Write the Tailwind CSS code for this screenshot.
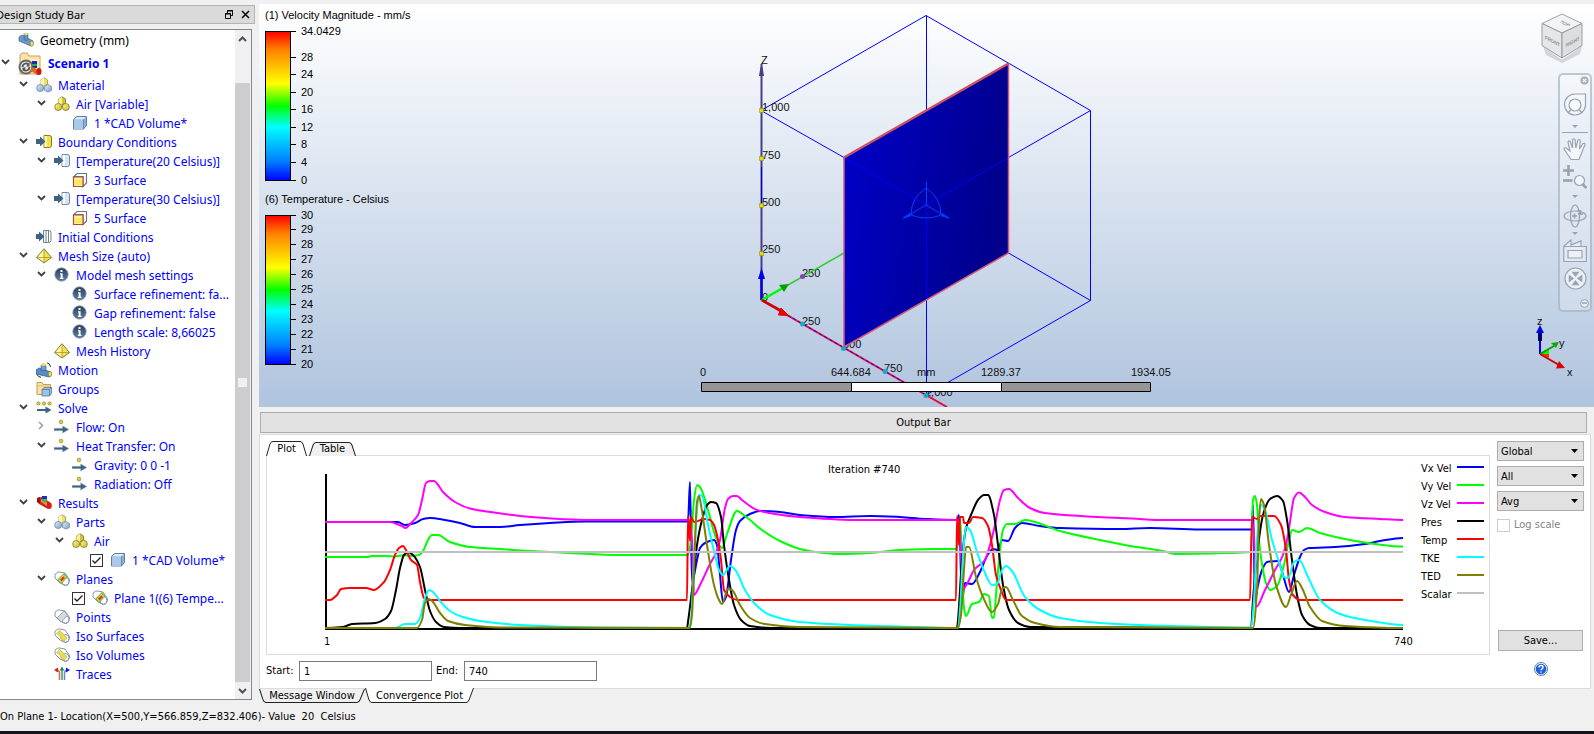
<!DOCTYPE html>
<html lang="en">
<head>
<meta charset="utf-8">
<title>Design Study</title>
<script src="https://cdn.jsdelivr.net/npm/@tailwindcss/browser@4"></script>
</head>
<body class="flex h-screen flex-col overflow-hidden bg-[#f0f0f0] font-['DejaVu_Sans_Condensed','DejaVu_Sans',sans-serif] text-[11px] leading-[14px] text-black">

<svg class="absolute size-0" aria-hidden="true">
  <defs>
    <linearGradient id="steel" x1="0" y1="0" x2="1" y2="1"><stop offset="0" stop-color="#e4eefa"/><stop offset="1" stop-color="#7f9fc4"/></linearGradient>
    <linearGradient id="gold" x1="0" y1="0" x2="1" y2="1"><stop offset="0" stop-color="#fff68a"/><stop offset="1" stop-color="#cdb92c"/></linearGradient>
    <linearGradient id="info" x1="0" y1="0" x2="0" y2="1"><stop offset="0" stop-color="#2a3f58"/><stop offset="1" stop-color="#5d7ea3"/></linearGradient>
    <linearGradient id="rainbow" x1="0" y1="0" x2="0" y2="1"><stop offset="0" stop-color="#f00"/><stop offset=".12" stop-color="#ff8000"/><stop offset=".35" stop-color="#ff0"/><stop offset=".5" stop-color="#0f0"/><stop offset=".64" stop-color="#0ff"/><stop offset=".87" stop-color="#0080ff"/><stop offset="1" stop-color="#00f"/></linearGradient>
    <linearGradient id="plane" x1="0" y1="0" x2="1" y2=".3"><stop offset="0" stop-color="#0000cc"/><stop offset="1" stop-color="#00008c"/></linearGradient>
  </defs>
  <symbol id="i-geometry" viewBox="0 0 16 16"><path d="M1 5l3-2 11 6v4l-2 1L1 9z" fill="#6f98c8" stroke="#3d6086" stroke-width=".7"/><path d="M6 1.500h4v6l-2 1.500-2-1.500z" fill="#5b8fd0" stroke="#41658c" stroke-width=".6"/><ellipse cx="8" cy="2" rx="2" ry="1.200" fill="#e8e06a"/><ellipse cx="13.800" cy="11.500" rx="1.700" ry="2.600" fill="#f0e35a" stroke="#7b7a3b" stroke-width=".6"/></symbol>
  <symbol id="i-scenario" viewBox="0 0 24 24"><path d="M2 22V3l2-2h5l2 3h11v18z" fill="#fbe3a8" stroke="#c9a356"/><path d="M3 8h19" stroke="#fff5d8"/><circle cx="8" cy="15" r="6.500" fill="#e8e8e8" stroke="#666" stroke-width="2"/><path d="M4.500 15a3.500 3.500 0 0 1 6-2.500M11.500 15a3.500 3.500 0 0 1-6 2.500" fill="none" stroke="#555" stroke-width="1.800"/><path d="M11.500 10.500v4h-3.500zM4.500 19.500v-4H8z" fill="#555"/><path d="M14 9h5v7h-5z" fill="#1c2cc0"/><path d="M14 12h5v2h-5z" fill="#18b05c"/><path d="M13 14l9 5v3l-3 1-6-4z" fill="#e06a1c"/><ellipse cx="21" cy="19.500" rx="2.500" ry="3.500" fill="#cf1515"/></symbol>
  <symbol id="i-mat" viewBox="0 0 16 16"><path d="M8 .8L11.600 3v4L8 9 4.400 7V3z" fill="#eee06a" stroke="#8d8a5a" stroke-width=".8"/><path d="M8 .8V9L4.400 7V3z" fill="#fdf7b4"/><circle cx="4.200" cy="11" r="3.500" fill="url(#steel)" stroke="#6887a8" stroke-width=".8"/><path d="M12 7.500l3.400 2v4L12 15l-3.400-1.500v-4z" fill="url(#steel)" stroke="#6887a8" stroke-width=".8"/></symbol>
  <symbol id="i-air" viewBox="0 0 16 16"><path d="M8 .8L11.600 3v4L8 9 4.400 7V3z" fill="#cfc23e" stroke="#77701f" stroke-width=".8"/><path d="M8 .8V9L4.400 7V3z" fill="#f8f08c"/><circle cx="4.200" cy="11" r="3.500" fill="url(#gold)" stroke="#7d7622" stroke-width=".8"/><circle cx="11.800" cy="11" r="3.500" fill="url(#gold)" stroke="#7d7622" stroke-width=".8"/></symbol>
  <symbol id="i-cube" viewBox="0 0 16 16"><path d="M1.500 4.500l3-3h10v9l-3 3.500h-10z" fill="#8fb1d8" stroke="#5c7fa6"/><path d="M2 5h9v9H2z" fill="#a9c8ea"/><path d="M2 4.500l3-2.500h9l-3 2.500z" fill="#dbe9f8"/><path d="M11.500 4.500V14" stroke="#5c7fa6" stroke-width=".8"/></symbol>
  <symbol id="i-bc" viewBox="0 0 16 16"><path d="M8 1.500h5.500q2 0 2 2v8q0 2-2 2H8z" fill="#f1df4a" stroke="#85782a"/><path d="M8.500 2h2.500v11H8.500z" fill="#fffab5"/><path d="M0 5h4V2.500l5.500 5L4 12.500V10H0z" fill="#3f6282"/></symbol>
  <symbol id="i-temp" viewBox="0 0 16 16"><path d="M8 1.500h5.500q2 0 2 2v8q0 2-2 2H8z" fill="#d7e3f2" stroke="#6f87a2"/><path d="M8.500 2h2.500v11H8.500z" fill="#fff"/><path d="M0 5h4V2.500l5.500 5L4 12.500V10H0z" fill="#3f6282"/></symbol>
  <symbol id="i-init" viewBox="0 0 16 16"><path d="M7.500 1.500h5q2.500 0 2.500 2v8q0 2-2.500 2h-5z" fill="#fff" stroke="#70808f"/><path d="M10 1.500v12M12.500 1.500v12" stroke="#70808f"/><path d="M0 5h3V2.500l5.500 5L3 12.500V10H0z" fill="#3f6282"/></symbol>
  <symbol id="i-surf" viewBox="0 0 16 16"><path d="M5 1.500h9.500V11L11 14.500V4.500H2z" fill="#fff" stroke="#6b7886" stroke-width="1.200"/><path d="M1.500 5h9.500v9.500H1.500z" fill="#fdf29a" stroke="#b4483a" stroke-width="1.200"/><path d="M3 8h7v5H3z" fill="#f7e95a"/></symbol>
  <symbol id="i-mesh" viewBox="0 0 16 16"><path d="M8 .7L15.500 9.500 8 15 .5 9.500z" fill="#f2e24f" stroke="#7f7a4a"/><path d="M8 1.500V14L1.500 9.500z" fill="#fff59b"/><path d="M1 9.500h14M8 1v13" stroke="#a99a2c" stroke-width=".8"/></symbol>
  <symbol id="i-info" viewBox="0 0 16 16"><circle cx="7.500" cy="7.500" r="6.700" fill="url(#info)" stroke="#8da0b6" stroke-width=".8"/><path d="M6.500 3h2v2h-2zM6 6.200h2.600v4.600H9.500V12H5.800v-1.200h.9V7.400H6z" fill="#fff"/></symbol>
  <symbol id="i-motion" viewBox="0 0 16 16"><path d="M0 8l3-2 12 4v4l-2 1L0 12z" fill="#5b8ac4" stroke="#2f5683" stroke-width=".7"/><path d="M5 3.500h5v5H5z" fill="#6c9cd6" stroke="#2f5683" stroke-width=".6"/><ellipse cx="7.500" cy="2.500" rx="2.500" ry="1.500" fill="#f0e04c"/><ellipse cx="14" cy="12" rx="1.600" ry="2.800" fill="#f0e04c" stroke="#807b31" stroke-width=".6"/><path d="M11 .8q3 .5 3.500 4M1 12.500q1 2.500 4 2.800" fill="none" stroke="#222"/></symbol>
  <symbol id="i-groups" viewBox="0 0 16 16"><path d="M1 13.500v-12h5l1 2h7.500v10z" fill="#fbe2a0" stroke="#c8a04c"/><path d="M1 5h13" stroke="#e0bd70"/><path d="M6 8.500L8 6.500h7.500v6l-2 2.500H6z" fill="#9fc0e6" stroke="#54789f" stroke-width=".8"/><path d="M6 8.500h7.500V15M13.500 8.500l2-2" fill="none" stroke="#54789f" stroke-width=".8"/></symbol>
  <symbol id="i-solve" viewBox="0 0 16 16"><g fill="#d9cb3c" stroke="#8c8434" stroke-width=".6"><circle cx="2.500" cy="3.500" r="1.700"/><circle cx="8" cy="3.500" r="1.700"/><circle cx="13.500" cy="3.500" r="1.700"/></g><path d="M1 9h8.500V6.500l6 3.500-6 3.500V11H1z" fill="#3f6282"/></symbol>
  <symbol id="i-step" viewBox="0 0 16 16"><circle cx="7" cy="3" r="1.900" fill="#d9cb3c" stroke="#8c8434" stroke-width=".6"/><path d="M0 9.300h8.500V6.800l6.500 3.700-6.500 3.700v-2.500H0z" fill="#3f6282" stroke="#b8c6d4" stroke-width=".5"/></symbol>
  <symbol id="i-results" viewBox="0 0 16 16"><path d="M1 3l5-1 9 6v5l-3 1-9-5-2-2z" fill="#c22"/><path d="M1 3l3-1v6L1 7z" fill="#a01010"/><path d="M5 4l6 3v4l-6-4z" fill="#f08a28"/><path d="M6 1h5v4H6z" fill="#1b2dc4"/><path d="M6 4h5v2L8.500 7 6 6z" fill="#25c36b"/><ellipse cx="13.800" cy="10.700" rx="2" ry="3" fill="#d81c1c"/></symbol>
  <symbol id="i-tube" viewBox="0 0 16 16"><path d="M1 4.500C1 2.500 3 .8 5.500 1l5.500 1 4.500 6.500c.5 2.500-1.500 5.500-4 5.800L6 12 1 7z" fill="#fff" stroke="#8294a8"/><ellipse cx="11.500" cy="10.500" rx="3.500" ry="4" fill="none" stroke="#8294a8"/></symbol>
  <symbol id="i-planes" viewBox="0 0 16 16"><use href="#i-tube"/><path d="M3 9l7-7 3.500 4L7.500 13z" fill="#58b868"/><path d="M4.500 9l5-5.500 2.800 2.700-5 5.500z" fill="#f0d832"/><path d="M6 8.500l3.300-3.300 1.700 1.700-3.500 3.500z" fill="#e8361c"/></symbol>
  <symbol id="i-points" viewBox="0 0 16 16"><use href="#i-tube"/><path d="M3 9l7-7 3.500 4L7.500 13z" fill="#d4dae0" stroke="#8f9ba8" stroke-width=".8"/></symbol>
  <symbol id="i-iso" viewBox="0 0 16 16"><use href="#i-tube"/><path d="M2.500 5.500l3-3 2 1.500 5.500 6-3 3.500-4-3.500 1-1z" fill="#e9dc4e" stroke="#b5aa4a" stroke-width=".6"/></symbol>
  <symbol id="i-traces" viewBox="0 0 16 16"><path d="M5.500 14V6.500Q5 4.500 3 4" fill="none" stroke="#e86060" stroke-width="1.500"/><path d="M10.500 14V6.500Q11 4.500 13 4" fill="none" stroke="#6a80e0" stroke-width="1.500"/><path d="M8 14V4" stroke="#34a06a" stroke-width="1.500"/><path d="M4 1.500v5L0 4z" fill="#e01818"/><path d="M12 1.500v5L16 4z" fill="#1818d8"/><path d="M5.700 4.500h4.600L8 .5z" fill="#168a4a"/></symbol>
</svg>

<main class="flex min-h-0 flex-1">
  <aside class="flex w-[259px] shrink-0 flex-col pt-[5px]">
    <header class="mr-1 flex h-[19px] shrink-0 items-center overflow-hidden border border-l-0 border-[#b4b4b4] bg-[#dadada] pr-1">
      <h1 class="-ml-1 flex-1 font-['Noto_Sans',sans-serif] text-[11px]">Design Study Bar</h1>
      <button aria-label="Float" class="mr-2"><svg width="8" height="9" viewBox="0 0 8 9" fill="none" stroke="#000"><path d="M2.500 3V.5h5v5H5.500M2 1h6" /><path d="M.5 3.500h5v5h-5zM0 4h6"/></svg></button>
      <button aria-label="Close"><svg width="9" height="9" viewBox="0 0 9 9" stroke="#000" stroke-width="1.500"><path d="M1 1l7 7M8 1L1 8"/></svg></button>
    </header>
    <div class="mt-[5px] mr-[7px] mb-[3px] flex min-h-0 flex-1 border border-l-0 border-[#828790] bg-white">
      <ul id="tree" role="tree" class="min-w-0 flex-1 overflow-hidden font-['Noto_Sans',sans-serif] text-[12px] whitespace-nowrap text-[#0000ff]"></ul>
      <div class="flex w-[16px] shrink-0 flex-col bg-[#f0f0f0] pr-px">
        <button aria-label="Scroll up" class="grid h-[53px] justify-center pt-[6px]"><svg width="9" height="6" viewBox="0 0 9 6" fill="none" stroke="#505050" stroke-width="2"><path d="M1 5l3.500-3.500L8 5"/></svg></button>
        <div class="grid min-h-0 flex-1 place-items-center bg-[#cdcdcd]"><span class="size-[9px] bg-[#f0f0f0]"></span></div>
        <button aria-label="Scroll down" class="grid h-[17px] place-items-center"><svg width="9" height="6" viewBox="0 0 9 6" fill="none" stroke="#505050" stroke-width="2"><path d="M1 1l3.500 3.500L8 1"/></svg></button>
      </div>
    </div>
  </aside>

  <section class="flex min-w-0 flex-1 flex-col pt-1">
    <div class="relative shrink-0 bg-linear-to-b from-white to-[#b0c4de]">
      <svg class="block h-[403px] w-full font-['Liberation_Sans',sans-serif] text-[11px]" viewBox="259 4 1335 403" preserveAspectRatio="xMinYMin slice">
        <g id="legends"></g>

        <path d="M761 110.500L926 15.500 1090.500 110.500V300.500L926 395M926.500 15.500V395M761 110.500l83 47M1090.500 110.500l-82 47M1090.500 300.500l-82-47.500" fill="none" stroke="#0000ff"/>
        <g fill="#111">
          <text x="762" y="111">1,000</text><text x="762" y="159">750</text><text x="762" y="206">500</text><text x="762" y="253">250</text>
          <text x="761" y="64">Z</text><text x="762" y="301">0</text>
          <text x="802" y="277">250</text><text x="802" y="325">250</text><text x="884" y="372">750</text><text x="925" y="396">1,000</text>
        </g>
        <path d="M761 300L947 407" stroke="#e01040" stroke-width="2"/>
        <path d="M788 315.500L926 395" stroke="#0000ff" stroke-dasharray="3 3"/>
        <path d="M761 300.500l83-47.500" stroke="#2ccc2c" stroke-width="1.500"/>
        <text x="843" y="348" fill="#111">500</text>
        <path d="M844 157.500L1008.500 63.500V253L844 347z" fill="url(#plane)"/>
        <path d="M844 157.500l82 47.500 82.500-47.500M926.500 205V301" fill="none" stroke="#0000f4"/>
        <path d="M1008.500 63.500V253L844 347V157.500" fill="none" stroke="#d8587c" stroke-width="1.500"/>
        <path d="M844 157.500L1008.500 63.500" stroke="#cc5060" stroke-width="2.500"/>
        <g fill="none" stroke="#0040ff"><path d="M926.500 182v23M926 188q-15 10-15 27 15 6 30 0 0-17-15-27M926 205l-22 13M926 205l22 13"/><path d="M903 218l7-4.500v2.500zM949 218l-7-4.500v2.500z" fill="#0040ff"/></g>
        <path d="M761.500 64v236" stroke="#483d8b" stroke-width="2"/>
        <path d="M761.500 167v38" stroke="#0000d0" stroke-width="1"/>
        <path d="M759 76l1.500-9h2l1.500 9z" fill="#483d8b"/>
        <path d="M761.500 278v22" stroke="#0000e0" stroke-width="2.500"/><path d="M758 279l3.500-11 3.500 11z" fill="#0000f0"/>
        <path d="M762 300l19-11" stroke="#00ff00" stroke-width="2.500"/><path d="M779 285l10-1-5 8z" fill="#00a000"/>
        <path d="M762 300l18 10" stroke="#d00000" stroke-width="2.500"/><path d="M781 308l7.500 7.500-10-.5z" fill="#f00000" stroke="#d00" />
        <g fill="#e6dc00" stroke="#8a8420" stroke-width=".5"><path d="M759.500 108.500h4v4h-4zM759.500 156.500h4v4h-4zM759.500 203.500h4v4h-4zM759.500 251.500h4v4h-4z"/></g>
        <g fill="#20a8b8"><circle cx="802.500" cy="324" r="2.500"/><circle cx="843.500" cy="348.500" r="2.500"/><circle cx="885" cy="371.500" r="2.500"/><circle cx="926" cy="395.500" r="2.500"/></g>
        <circle cx="802.500" cy="276.500" r="2.500" fill="#8e3cb8"/>

        <g stroke="#000"><path d="M701.500 382.500h150v9h-150zM1001.500 382.500h149v9h-149z" fill="#969696"/><path d="M851.500 382.500h150v9h-150z" fill="#fff"/></g>
        <g fill="#111"><text x="700" y="376">0</text><text x="831" y="376">644.684</text><text x="917" y="376">mm</text><text x="981" y="376">1289.37</text><text x="1131" y="376">1934.05</text></g>

        <path d="M1543 46l19 14 20-14-2 8-18 9-16-8z" fill="#808890" opacity=".3"/>
        <g stroke="#8c8c8c" stroke-width=".8"><path d="M1562 14l-20 9.500 20 9.500 20-9.500z" fill="#f2f3f4"/><path d="M1542 23.500v22l20 12.500V33z" fill="#e4e6e8"/><path d="M1582 23.500v22L1562 58V33z" fill="#dcdee0"/></g>
        <g fill="#8a8a8a" class="text-[5px] font-bold"><text transform="matrix(.87 .45 0 1 1545 39)">FRONT</text><text transform="matrix(.87 -.45 0 1 1566 47)">RIGHT</text><text transform="matrix(.87 .45 -.87 .45 1559 22)">TOP</text></g>

        <path d="M1540 354V332" stroke="#0000e0" stroke-width="2"/><path d="M1536 333l4-8 4 8z" fill="#0000f0"/><path d="M1538 333h4v8h-4z" fill="#000060"/>
        <path d="M1540 354l9-5v5z" fill="#00ff00"/><path d="M1540 354l14-8" stroke="#00a000" stroke-width="2"/><path d="M1551 343l8-1-3 6z" fill="#00b000"/>
        <path d="M1541 354h8v4z" fill="#ff3000"/><path d="M1540 354l19 11" stroke="#d00000" stroke-width="2"/><path d="M1559 361l6 7-9 .5z" fill="#e00000"/>
        <g fill="#111"><text x="1537" y="325">z</text><text x="1559" y="347">y</text><text x="1567" y="376">x</text></g>
      </svg>

      <nav aria-label="Navigation" class="absolute top-[69px] right-[2px] flex h-[239px] w-[34px] flex-col items-center rounded-[5px] border-2 border-[#9aa8b8]/60 bg-white/20 text-[#98a3af]">
        <button aria-label="Close bar" class="mt-px self-end pr-px"><svg class="size-[9px]" viewBox="0 0 9 9"><circle cx="4.500" cy="4.500" r="4" fill="#a4adb8"/><path d="M2.800 2.800l3.400 3.400M6.200 2.800L2.800 6.200" stroke="#fff" stroke-width="1.200"/></svg></button>
        <button aria-label="Wheel" class="mt-2"><svg class="size-[24px]" viewBox="0 0 24 24" fill="#fff5" stroke="currentColor" stroke-width="1.200"><path d="M12 1h10.500v11a10.500 10.500 0 1 1-10.500-11z"/><circle cx="12" cy="12" r="6"/><path d="M8 16.500L5 20M16 16.500l3 3.500" /></svg></button>
        <svg class="mt-2 h-[3px] w-[6px]" viewBox="0 0 6 3"><path d="M0 0h6L3 3z" fill="currentColor"/></svg>
        <hr class="mt-1 w-[26px] border-[#98a3af]">
        <button aria-label="Pan" class="mt-1"><svg class="size-[24px]" viewBox="0 0 24 24" fill="#fff8" stroke="currentColor" stroke-width="1.200"><path d="M7 21L3 15 1 12q.5-2 2.500-.8L7 14 5 5q1-2 2.300-.3L9.500 11l.2-8.500q1.300-1.500 2.300 0l.8 8.500L15 3q1.500-1.200 2.200.5L16.500 12 20 6.500q1.800-.7 2 1L19 15l-3 7.500H8z"/></svg></button>
        <button aria-label="Zoom" class="mt-1"><svg class="size-[24px]" viewBox="0 0 24 24" fill="none" stroke="currentColor"><path d="M5.500 0v11M0 5.500h11" stroke-width="2.600"/><path d="M0 15.500h9.500" stroke-width="2.600"/><circle cx="16.500" cy="15.500" r="5" fill="#fff8" stroke-width="1.200"/><path d="M19.500 19l4 4" stroke-width="2.600"/></svg></button>
        <svg class="mt-1.5 h-[3px] w-[6px]" viewBox="0 0 6 3"><path d="M0 0h6L3 3z" fill="currentColor"/></svg>
        <button aria-label="Orbit" class="mt-1.5"><svg class="size-[24px]" viewBox="0 0 24 24" fill="none" stroke="currentColor" stroke-width="1.200"><ellipse cx="12" cy="12" rx="11" ry="5"/><ellipse cx="12" cy="12" rx="4.500" ry="11"/><path d="M9 12h5M11.500 9.500v5M15 10h5M17.500 6v5M14 7h4" stroke-width="1.500"/></svg></button>
        <svg class="mt-1 h-[3px] w-[6px]" viewBox="0 0 6 3"><path d="M0 0h6L3 3z" fill="currentColor"/></svg>
        <button aria-label="Show motion" class="mt-1"><svg class="size-[24px]" viewBox="0 0 24 24" fill="#fff5" stroke="currentColor" stroke-width="1.200"><path d="M.8 7.500h22.500v15H.8z"/><path d="M5 11.500h14v7.500H5z"/><path d="M1 7L8 1v5l10-4v5"/></svg></button>
        <button aria-label="Fit" class="mt-1"><svg class="size-[23px]" viewBox="0 0 24 24" fill="#fff8" stroke="currentColor" stroke-width="1.200"><circle cx="12" cy="12" r="11"/><path d="M9 5.500h6L12 9.500zM9 18.500h6L12 14.500zM5.500 9v6L9.500 12zM18.500 9v6L14.500 12z" fill="currentColor"/></svg></button>
        <button aria-label="Options" class="mt-auto self-end pr-px pb-[2px]"><svg class="size-[9px]" viewBox="0 0 9 9"><circle cx="4.500" cy="4.500" r="3.900" fill="#fff8" stroke="currentColor"/><path d="M2 4h5" stroke="currentColor" stroke-width="1.500"/></svg></button>
      </nav>
    </div>

    <h2 class="mt-[5px] mr-[7px] ml-px flex h-[21px] shrink-0 items-center justify-center border border-[#adadad] bg-[#e1e1e1]">Output Bar</h2>

    <div class="mt-px mr-[3px] flex gap-[7px] border border-[#dcdcdc] bg-white pt-[6px] pr-[6px] pb-[7px] pl-[6px]">
      <div class="min-w-0 flex-1">
        <div role="tablist" class="flex h-[14px] items-end gap-[2px] pr-1">
          <button role="tab" aria-selected="true" class="-mb-px grid h-[15px] w-[41px]"><svg class="col-start-1 row-start-1 h-full w-full" viewBox="0 0 41 15" preserveAspectRatio="none"><path d="M.5 15L4 3Q5 .5 7 .5H34Q36 .5 37 3L40.500 15" fill="#fff" stroke="#222"/></svg><span class="col-start-1 row-start-1 pt-px">Plot</span></button>
          <button role="tab" aria-selected="false" class="grid h-[13px] w-[47px]"><svg class="col-start-1 row-start-1 h-full w-full" viewBox="0 0 47 13" preserveAspectRatio="none"><path d="M.5 13L4 3Q5 .5 7 .5H40Q42 .5 43 3L46.500 13" fill="#f0f0f0" stroke="#222"/></svg><span class="col-start-1 row-start-1">Table</span></button>
        </div>
        <div class="border border-[#dcdcdc]">
          <svg id="chart" class="block h-[198px] w-full text-[11px]" viewBox="267 456 1222 198">
            <text x="828" y="473">Iteration #740</text>
            <path d="M326 474v155M325 629H1403" stroke="#000" stroke-width="2" fill="none"/>
            <text x="324" y="645">1</text><text x="1394" y="645">740</text>
          </svg>
        </div>
        <form class="mt-[6px] flex h-[20px] items-center">
          <label for="start" class="w-[33px]">Start:</label>
          <input id="start" value="1" class="h-[20px] w-[133px] border border-[#7a7a7a] bg-white px-1 pt-px outline-none">
          <label for="end" class="w-[32px] pl-1">End:</label>
          <input id="end" value="740" class="h-[20px] w-[133px] border border-[#7a7a7a] bg-white px-1 pt-px outline-none">
        </form>
      </div>
      <div class="flex w-[87px] shrink-0 flex-col">
        <div class="grid h-[20px] items-center"><select aria-label="Scope" class="col-start-1 row-start-1 h-[20px] w-full appearance-none border border-[#adadad] bg-[#e1e1e1] px-[3px] leading-[17px] outline-none"><option>Global</option></select><svg class="pointer-events-none col-start-1 row-start-1 mr-[6px] h-[4px] w-[7px] justify-self-end" viewBox="0 0 7 4"><path d="M0 0h7L3.500 4z"/></svg></div>
        <div class="mt-[5px] grid h-[20px] items-center"><select aria-label="Variables" class="col-start-1 row-start-1 h-[20px] w-full appearance-none border border-[#adadad] bg-[#e1e1e1] px-[3px] leading-[17px] outline-none"><option>All</option></select><svg class="pointer-events-none col-start-1 row-start-1 mr-[6px] h-[4px] w-[7px] justify-self-end" viewBox="0 0 7 4"><path d="M0 0h7L3.500 4z"/></svg></div>
        <div class="mt-[5px] grid h-[20px] items-center"><select aria-label="Statistic" class="col-start-1 row-start-1 h-[20px] w-full appearance-none border border-[#adadad] bg-[#e1e1e1] px-[3px] leading-[17px] outline-none"><option>Avg</option></select><svg class="pointer-events-none col-start-1 row-start-1 mr-[6px] h-[4px] w-[7px] justify-self-end" viewBox="0 0 7 4"><path d="M0 0h7L3.500 4z"/></svg></div>
        <label class="mt-[7px] flex items-center gap-1 text-[#838383]"><input type="checkbox" disabled class="size-[13px] appearance-none border border-[#cccccc] bg-white">Log scale</label>
        <button class="mx-px mt-auto mb-[11px] h-[21px] border border-[#adadad] bg-[#e1e1e1]">Save...</button>
        <button aria-label="Help" class="mb-[5px] self-center"><svg class="block" width="14" height="14" viewBox="0 0 14 14"><circle cx="7" cy="7" r="6.500" fill="#fff" stroke="#5578b8"/><circle cx="7" cy="7" r="5.300" fill="#1d5fd6"/><path d="M5 5.500q0-2 2-2t2 1.700q0 1-1 1.600-1 .5-1 1.500M7 9.400v1.400" fill="none" stroke="#fff" stroke-width="1.400"/></svg></button>
      </div>
    </div>
    <div role="tablist" class="-mt-px flex items-start">
      <button role="tab" aria-selected="false" class="mt-px grid h-[13px] w-[106px]"><svg class="col-start-1 row-start-1 h-full w-full" viewBox="0 0 106 13" preserveAspectRatio="none"><path d="M.5 0L4 10Q5 12.500 7 12.500H98Q100 12.500 101 10L105.500 0" fill="#f0f0f0" stroke="#222"/></svg><span class="col-start-1 row-start-1">Message Window</span></button>
      <button role="tab" aria-selected="true" class="grid h-[15px] w-[109px]"><svg class="col-start-1 row-start-1 h-full w-full" viewBox="0 0 109 15" preserveAspectRatio="none"><path d="M.5 0L4 12Q5 14.500 7 14.500H101Q103 14.500 104 12L108.500 0" fill="#fff" stroke="#222"/></svg><span class="col-start-1 row-start-1 pt-px">Convergence Plot</span></button>
    </div>
  </section>
</main>
<footer class="flex h-[31px] shrink-0 items-center border-b-[3px] border-[#161418] whitespace-pre">On Plane 1- Location(X=500,Y=566.859,Z=832.406)- Value  20  Celsius</footer>

<script>
// level, disclosure state, icon, label, options
const rows = [
  [0, '', 'geometry', 'Geometry (mm)', 'root'], [0, 'open', 'scenario', 'Scenario 1', 'scenario'],
  [1, 'open', 'mat', 'Material'], [2, 'open', 'air', 'Air [Variable]'], [3, '', 'cube', '1 *CAD Volume*'],
  [1, 'open', 'bc', 'Boundary Conditions'], [2, 'open', 'temp', '[Temperature(20 Celsius)]'], [3, '', 'surf', '3 Surface'],
  [2, 'open', 'temp', '[Temperature(30 Celsius)]'], [3, '', 'surf', '5 Surface'], [1, '', 'init', 'Initial Conditions'],
  [1, 'open', 'mesh', 'Mesh Size (auto)'], [2, 'open', 'info', 'Model mesh settings'], [3, '', 'info', 'Surface refinement: fa...'],
  [3, '', 'info', 'Gap refinement: false'], [3, '', 'info', 'Length scale: 8,66025'], [2, '', 'mesh', 'Mesh History'],
  [1, '', 'motion', 'Motion'], [1, '', 'groups', 'Groups'], [1, 'open', 'solve', 'Solve'], [2, 'closed', 'step', 'Flow: On'],
  [2, 'open', 'step', 'Heat Transfer: On'], [3, '', 'step', 'Gravity: 0 0 -1'], [3, '', 'step', 'Radiation: Off'],
  [1, 'open', 'results', 'Results'], [2, 'open', 'mat', 'Parts'], [3, 'open', 'air', 'Air'], [4, '', 'cube', '1 *CAD Volume*', 'check'],
  [2, 'open', 'planes', 'Planes'], [3, '', 'planes', 'Plane 1((6) Tempe...', 'check'], [2, '', 'points', 'Points'],
  [2, '', 'iso', 'Iso Surfaces'], [2, '', 'iso', 'Iso Volumes'], [2, '', 'traces', 'Traces']
];
const chevrons = {
  open: '<svg class="h-[6px] w-[9px]" viewBox="0 0 9 6" fill="none" stroke="#404040" stroke-width="1.800"><path d="M1 1l3.500 3.500L8 1"/></svg>',
  closed: '<svg class="h-[9px] w-[6px]" viewBox="0 0 6 9" fill="none" stroke="#a0a0a0" stroke-width="1.600"><path d="M1 1l3.500 3.500L1 8"/></svg>'
};
document.getElementById('tree').innerHTML = rows.map(([level, state, icon, label, kind], i) => {
  const rowClass = kind === 'scenario' ? 'flex h-[25px] items-center font-bold' : kind === 'root' ? 'flex h-[21px] items-center text-black' : 'flex h-[19px] items-center';
  const iconClass = kind === 'scenario' ? 'size-[24px] mr-[6px] shrink-0' : 'size-[16px] mr-[6px] mb-[2px] shrink-0';
  const box = kind === 'check' ? `<span class="mr-[7px] grid shrink-0 place-items-center"><input id="n${i}" type="checkbox" checked class="col-start-1 row-start-1 size-[13px] appearance-none border border-[#333333] bg-white"><svg class="pointer-events-none col-start-1 row-start-1 size-[9px]" viewBox="0 0 9 9" fill="none" stroke="#222" stroke-width="1.400"><path d="M.5 4.500L3 7l5.500-5.500"/></svg></span>` : '';
  const text = kind === 'check' ? `<label for="n${i}">${label}</label>` : `<span>${label}</span>`;
  return `<li role="treeitem" class="${rowClass}" style="padding-left:${level * 18}px"><span class="mr-2 mb-1 grid w-[10px] shrink-0 place-items-center">${chevrons[state] || ''}</span>${box}<svg class="${iconClass}"><use href="#i-${icon}"/></svg>${text}</li>`;
}).join('');

// colour legends: [title, title baseline, bar top, bar bottom, [label, tick y]...]
const legends = [
  ['(1) Velocity Magnitude - mm/s', 19, 31.5, 180.5, [['34.0429', 31.5], ['28', 57.5], ['24', 74.5], ['20', 92.5], ['16', 109.5], ['12', 127.5], ['8', 144.5], ['4', 162.5], ['0', 180.5]]],
  ['(6) Temperature - Celsius', 203, 215.5, 364.5, [['30', 215.5], ['29', 229.5], ['28', 244.5], ['27', 259.5], ['26', 274.5], ['25', 289.5], ['24', 304.5], ['23', 319.5], ['22', 334.5], ['21', 349.5], ['20', 364.5]]]
];
document.getElementById('legends').innerHTML = legends.map(([title, ty, top, bottom, ticks]) =>
  `<text x="265" y="${ty}">${title}</text><rect x="265.5" y="${top}" width="25" height="${bottom - top}" fill="url(#rainbow)" stroke="#000"/>` +
  ticks.map(([t, y]) => `<path d="M291 ${y}h5" stroke="#000"/><text x="301" y="${Math.floor(y) + 4}">${t}</text>`).join('')).join('');

const series = [
  ['Vx Vel', '#0000ff', '325,522 398,522 405,525 415,523 423,519 430,518 445,520 460,523 475,527 500,527 520,525 550,523 585,521.5 688,521.5 690,482 692,582 697,560 700,548 705,543 714,540 717,545 720,575 723,602 726,597 731,560 736,530 740,521 750,514 760,511 780,512 800,515 835,517 870,516 900,517 925,519 957,520 959,515 962,600 965,583 972,584 980,572 987,556 993,549 998,550 1002,540 1008,541 1015,528 1022,523 1040,526 1060,528 1120,529 1150,528 1200,529.5 1252,529.5 1253,505 1255,600 1258,585 1262,570 1267,562 1278,561 1283,575 1289,592 1294,575 1300,557 1304,550 1309,548 1335,547 1365,544 1380,541 1403,538'],
  ['Vy Vel', '#00ff00', '325,557 367,557 372,556 385,556 395,556.5 405,555 409,556 419,555 423,551 428,540 432,535 438,535 450,542 470,547 500,549 530,551 570,553 620,555 688,555 691,540 694,500 697,485 700,487 708,510 715,535 722,548 727,534 737,511 745,516 762,530 780,541 800,549 815,552 840,554 870,553 900,550 940,549 957,549 960,520 964,608 966,616 972,604 979,602 984,594 989,596 992,618 994,617 996,595 999,560 1003,530 1007,524 1015,524 1025,520 1035,522 1060,531 1100,540 1130,546 1163,551 1175,554 1230,553 1251,552 1253,500 1255,496 1257,505 1259,540 1263,570 1266,583 1270,590 1277,586 1284,565 1289,540 1292,530 1299,532 1307,528 1320,533 1345,539 1375,544 1403,546.5'],
  ['Vz Vel', '#ff00ff', '325,522 390,522 397,524 402,526 405.5,528 411,523 418,515 422,500 426,483 430,481 434,481 443,492 455,502 470,508.5 490,512 520,516 560,519 590,520 689,520 692,540 694,595 700,585 710,564 716,553 720,540 723,520 725,508 728,499 733,496 737,496 742,500 757,510 775,514 800,517 860,520 958,520 960,535 963,589 968,582 974,570 985,560 990,545 995,525 1000,500 1004,490 1009,489 1018,498 1030,508 1045,513 1080,516 1140,519 1160,520 1252,520 1254,535 1256,607 1265,590 1275,570 1283,555 1288,535 1291,515 1294,498 1299,492.5 1305,497 1312,505 1325,512 1345,517 1380,519 1403,520'],
  ['Pres', '#000000', '325,628 343,627 352,624 375,623 385,619 391,611 396,590 400,568 404,555 408,552 413,555 420,567 425,590 430,611 436,622 444,627 460,628 687,628 688,622 692,590 697,545 702,520 707,505 711,502 716,503 721,517 724,545 729,580 734,605 741,620 750,626 770,628 957,628 958,620 962,560 966,528 971,515 978,500 984,495 988,495 994,515 998,545 1003,585 1009,610 1018,623 1030,627 1251,628 1253,600 1257,555 1263,515 1270,499 1277,496 1283,501 1287,520 1292,560 1297,595 1302,615 1310,625 1320,628 1403,628'],
  ['Temp', '#ff0000', '325,600 330,600 337,595 341,589 350,588 366,588 374,590 384,582 390,570 395,555 399,548 403,546 406,550 411,560 417,565 420,582 424,598 428,600 687,600 688,516 690,541 691,517 694,522 698,521 704,519 710,520 714,525 718,540 721,560 724,590 730,597 738,600 956,600 957,516 959,545 960,517 963,517 964,523 969,523 973,517 982,518 988,526 992,545 996,575 1001,590 1006,600 1250,600 1252,517 1257,519 1260,516 1274,516 1281,525 1286,550 1289,580 1293,595 1300,600 1403,600'],
  ['TKE', '#00ffff', '325,628 395,628 405,624 415,624 420,618 425,598 429,590 433,592 440,601 450,611 460,616 480,621 520,625 600,627.5 689,628 691,620 694,560 697,510 699,495 702,496 708,525 715,555 719,570 723,575 730,566 736,571 745,590 755,604 770,615 800,622 850,625 920,627 958,628 960,610 963,555 966,527 970,530 977,552 985,573 992,585 997,584 1002,570 1006,566 1012,571 1025,597 1040,610 1060,618 1100,623 1170,626 1251,627.5 1254,600 1257,540 1261,505 1265,510 1272,540 1280,565 1284,577 1288,578 1294,562 1299,560 1308,577 1320,600 1340,614 1365,620 1403,625'],
  ['TED', '#808000', '325,628 417,628 422,620 425,603 429,599 433,602 440,613 448,621 465,625 500,627.5 690,628 692,615 694,570 697,502 699,496 701,505 707,545 714,585 719,600 722,604 728,589 732,590 740,605 750,618 765,624 800,627 958,628 961,615 964,570 966,547 969,547 976,577 983,597 992,612 998,604 1002,589 1006,587 1012,598 1022,616 1035,623 1060,627 1253,628 1257,590 1259,520 1261,499 1264,505 1269,545 1276,585 1286,607 1291,595 1297,581 1302,588 1310,607 1322,621 1345,626 1403,628'],
  ['Scalar', '#c0c0c0', '325,552 1403,552']
];
// monotone cubic path through the samples, so that flat parts never overshoot
function smooth(points) {
  const p = points.split(' ').map(s => s.split(',').map(Number));
  const slope = p.slice(1).map((q, i) => (q[1] - p[i][1]) / (q[0] - p[i][0]));
  const m = p.map((_, i) => {
    const a = slope[i - 1], b = slope[i];
    return a === undefined || b === undefined || a * b <= 0 ? 0 : 2 * a * b / (a + b);
  });
  return p.slice(1).reduce((d, q, i) => {
    const h = (q[0] - p[i][0]) / 3;
    return d + `C${p[i][0] + h} ${p[i][1] + m[i] * h} ${q[0] - h} ${q[1] - m[i + 1] * h} ${q[0]} ${q[1]}`;
  }, `M${p[0][0]} ${p[0][1]}`);
}
document.getElementById('chart').insertAdjacentHTML('beforeend', series.map(([name, colour, points], i) =>
  `<path d="${smooth(points)}" fill="none" stroke="${colour}" stroke-width="2" stroke-linejoin="round"/><text x="1421" y="${472 + i * 18}">${name}</text><path d="M1457 ${467 + i * 18}h27" stroke="${colour}" stroke-width="2"/>`).join(''));
</script>
</body>
</html>
